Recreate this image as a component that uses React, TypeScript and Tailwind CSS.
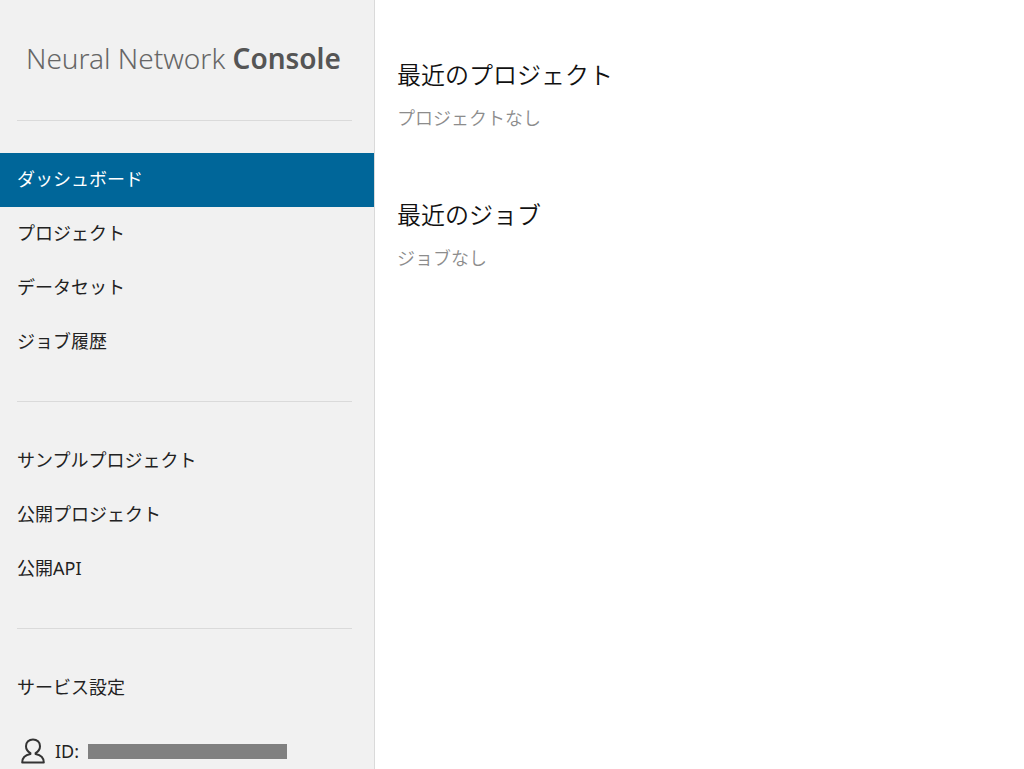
import React, { useState } from 'react';

interface NavGroupProps {
  items: string[];
  active: string;
  onSelect: (item: string) => void;
}

const NavGroup: React.FC<NavGroupProps> = ({ items, active, onSelect }) => (
  <ul>
    {items.map((item) => (
      <li key={item}>
        <a
          href="#"
          onClick={(e) => {
            e.preventDefault();
            onSelect(item);
          }}
          aria-current={item === active ? 'page' : undefined}
          className={`block px-[17px] pt-[13px] pb-[15px] text-lg leading-[26px] ${
            item === active ? 'bg-[#006699] text-white' : 'text-[#222222] hover:bg-[#e4e4e4]'
          }`}
        >
          {item}
        </a>
      </li>
    ))}
  </ul>
);

const Divider: React.FC = () => <hr className="my-8 mr-[22px] ml-[17px] border-[#dadada]" />;

const UserIcon: React.FC = () => (
  <svg
    width="24"
    height="26"
    viewBox="0 0 24 26"
    fill="none"
    stroke="#333333"
    strokeWidth="2"
    strokeLinejoin="round"
    aria-hidden="true"
  >
    <path d="M9.4 15.2C6.6 13.4 5 11.2 5 8.2C5 4.3 8 1.4 12 1.4S19 4.3 19 8.2C19 11.2 17.4 13.4 14.6 15.2V16C19.5 17 22.8 19.4 22.8 24.4H1.2C1.2 19.4 4.5 17 9.4 16Z" />
  </svg>
);

interface RecentSectionProps {
  title: string;
  empty: string;
}

const RecentSection: React.FC<RecentSectionProps> = ({ title, empty }) => (
  <section>
    <h2 className="text-2xl leading-9">{title}</h2>
    <p className="mt-[11px] text-lg leading-7 text-[#8c8c8c]">{empty}</p>
  </section>
);

const App: React.FC = () => {
  const [active, setActive] = useState('ダッシュボード');

  return (
    <div className="flex h-screen bg-white font-['Noto_Sans','Noto_Sans_CJK_JP',sans-serif] text-[#111111]">
      <aside className="w-[375px] shrink-0 overflow-hidden border-r border-[#dadada] bg-[#f1f1f1]">
        <h1 className="px-[26px] pt-[38px] pb-[10px] text-[28px] leading-10 font-light whitespace-nowrap text-[#666666]">
          Neural Network <span className="font-semibold text-[#555555]">Console</span>
        </h1>
        <nav>
          <Divider />
          <NavGroup
            items={['ダッシュボード', 'プロジェクト', 'データセット', 'ジョブ履歴']}
            active={active}
            onSelect={setActive}
          />
          <Divider />
          <NavGroup
            items={['サンプルプロジェクト', '公開プロジェクト', '公開API']}
            active={active}
            onSelect={setActive}
          />
          <Divider />
          <NavGroup items={['サービス設定']} active={active} onSelect={setActive} />
        </nav>
        <div className="flex items-center pt-[23px] pl-[21px] text-lg leading-[26px] text-[#222222]">
          <UserIcon />
          <span className="ml-[10px]">ID:</span>
          <span className="ml-[9px] h-[15px] w-[199px] bg-[#808080]" />
        </div>
      </aside>

      <main className="flex flex-1 flex-col gap-[65px] px-[22px] pt-[57px] font-[350]">
        <RecentSection title="最近のプロジェクト" empty="プロジェクトなし" />
        <RecentSection title="最近のジョブ" empty="ジョブなし" />
      </main>
    </div>
  );
};

export default App;
